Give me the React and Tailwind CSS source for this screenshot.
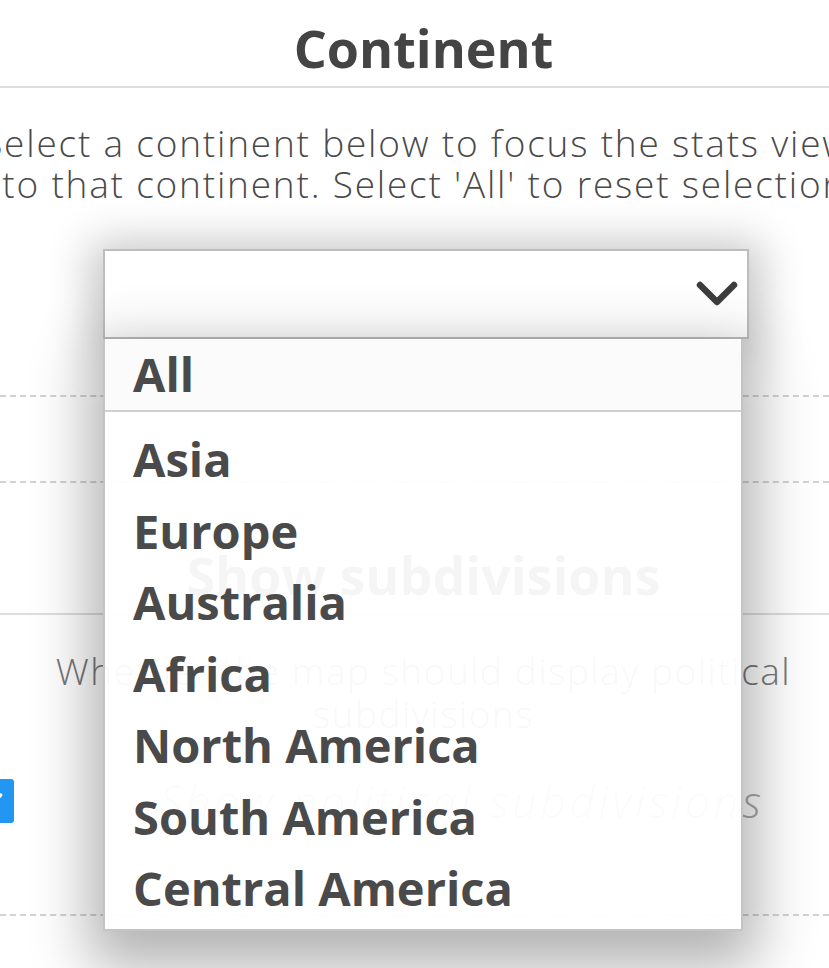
const continents = [
  'Asia',
  'Europe',
  'Australia',
  'Africa',
  'North America',
  'South America',
  'Central America',
];

function Chevron() {
  return (
    <svg width="44" height="30" viewBox="0 0 44 30" fill="none">
      <path d="M5 6 L22 23 L39 6" stroke="#3d3d3d" strokeWidth="6.5" strokeLinecap="round" strokeLinejoin="round" />
    </svg>
  );
}

function CheckBox() {
  return (
    <div className="flex h-[44px] w-[44px] shrink-0 items-center justify-center rounded-[3px] bg-[#2196f3]">
      <svg width="26" height="26" viewBox="0 0 24 24" fill="none">
        <path d="M4 12.5 L9.5 18 L20 6.5" stroke="white" strokeWidth="3.2" strokeLinecap="round" strokeLinejoin="round" />
      </svg>
    </div>
  );
}

export default function App() {
  return (
    <div className="relative h-[968px] w-full overflow-hidden bg-white font-['Open_Sans',sans-serif] text-[#444]">
      <div className="flex h-[86px] justify-center pl-[18px] pt-[22px]">
        <h1 className="text-[52px] font-bold leading-none">Continent</h1>
      </div>
      <div className="h-[2px] bg-[#dddddd]" />

      <div className="mt-[34px] flex flex-col items-center pl-[4px] text-[37px] font-light leading-[41px] tracking-[1.8px] whitespace-nowrap text-[#4a4a4a]">
        <p>Select a continent below to focus the stats view</p>
        <p className="pl-[26px]">to that continent. Select 'All' to reset selection.</p>
      </div>

      {/* continent select, opened */}
      <div className="relative z-20 ml-[103px] mt-[45px] w-[646px]">
        <div className="flex h-[90px] items-center justify-end border-2 border-[#bdbdbd] bg-white pr-[8px] shadow-[0_6px_44px_12px_rgba(0,0,0,0.24)]">
          <Chevron />
        </div>
        <ul className="absolute left-0 top-full w-[640px] border-2 border-t-0 border-[#c4c4c4] bg-white/95 pb-[4px] text-[47px] font-bold text-[#4a4a4a] shadow-[0_22px_54px_14px_rgba(0,0,0,0.3)]">
          <li className="flex h-[71px] items-center bg-[#fbfbfb] pl-[28px] leading-none">All</li>
          <li className="h-[2px] bg-[#d0d0d0]" />
          <li className="h-[12px]" />
          {continents.map((name) => (
            <li key={name} className="flex h-[71.5px] items-center pl-[28px] leading-none">
              {name}
            </li>
          ))}
        </ul>
      </div>

      <div className="mt-[56px] h-[88px] border-y-2 border-dashed border-[#d2d2d2]" />

      <div className="flex h-[132px] items-end justify-center border-b-2 border-[#dddddd] pb-[8px] pl-[18px]">
        <h2 className="text-[52px] font-bold leading-[60px]">Show subdivisions</h2>
      </div>

      <div className="mt-[34px] flex flex-col items-center pl-[18px] text-[37px] font-light leading-[43px] tracking-[1.5px] whitespace-nowrap text-[#777]">
        <p>Whether the map should display political</p>
        <p>subdivisions</p>
      </div>

      <div className="mt-[44px] flex h-[44px] items-center">
        <div className="-ml-[30px]">
          <CheckBox />
        </div>
        <span className="ml-[146px] text-[44px] font-light italic leading-none tracking-[3.8px] text-[#aaa]">Show political subdivisions</span>
      </div>

      <div className="mt-[91px] border-t-2 border-dashed border-[#d2d2d2]" />
    </div>
  );
}
